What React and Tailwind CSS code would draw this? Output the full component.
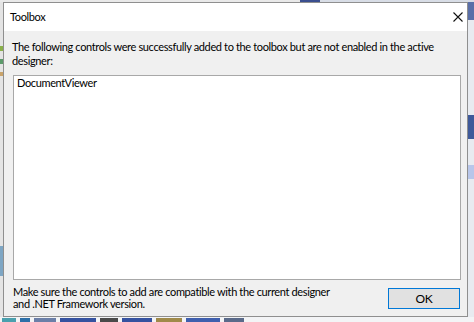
export default function App() {
  const font = { fontFamily: 'Lato, "Noto Sans", sans-serif' };

  const bottomBits = [
    ["w-[14px]", "bg-[#4aa0ae]"],
    ["w-[10px]", "bg-[#2d6fa8]"],
    ["w-[22px]", "bg-[#6b7fa8]"],
    ["w-[36px]", "bg-[#3552a0]"],
    ["w-[18px]", "bg-[#4a4a4a]"],
    ["w-[30px]", "bg-[#3552a0]"],
    ["w-[26px]", "bg-[#a08a4a]"],
    ["w-[34px]", "bg-[#3f5fae]"],
    ["w-[20px]", "bg-[#5a6a8a]"],
  ];

  return (
    <div className="w-[474px] h-[322px] overflow-hidden bg-[#eef0f3] flex flex-col" style={font}>
      <div className="h-[2px] flex">
        <div className="w-[300px] bg-[#e9e9e9]" />
        <div className="w-[20px] bg-[#3a4f8f]" />
        <div className="flex-1 bg-[#d8dde6]" />
      </div>
      <div className="flex h-[315px]">
        {/* left backdrop strip */}
        <div className="w-[3px] flex flex-col bg-[#e4e4e4]">
          <div className="h-[44px]" />
          <div className="h-[5px] bg-[#8ab04a]" />
          <div className="h-[8px]" />
          <div className="h-[5px] bg-[#5c9a6a]" />
          <div className="h-[8px]" />
          <div className="h-[4px] bg-[#c9a36a]" />
          <div className="h-[170px]" />
          <div className="h-[30px] bg-[#7ea6c4]" />
        </div>

        {/* dialog */}
        <div className="w-[465px] flex flex-col border border-[#8f8f8f] bg-[#f0f0f0] text-[11px] leading-[14px] tracking-[-0.36px] text-black">
          <div className="h-[28px] bg-white flex items-center justify-between pl-[6px] pr-[1px]">
            <span>Toolbox</span>
            <svg width="16" height="16" viewBox="0 0 16 16">
              <path d="M3.5 3.5 L12.5 12.5 M12.5 3.5 L3.5 12.5" stroke="#111" strokeWidth="1.1" fill="none" />
            </svg>
          </div>
          <div className="flex-1 flex flex-col pl-[8px] pr-[6px] pt-[9px]">
            <p className="whitespace-nowrap">
              The following controls were successfully added to the toolbox but are not enabled in the active
              <br />
              designer:
            </p>
            <div className="mt-[7px] ml-[1px] h-[205px] bg-white border border-[#a8a8a8] px-[3px]">
              DocumentViewer
            </div>
            <div className="flex items-start justify-between mt-[6px] pl-[1px]">
              <p className="whitespace-nowrap leading-[12px]">
                Make sure the controls to add are compatible with the current designer
                <br />
                and .NET Framework version.
              </p>
              <button className="w-[72px] h-[21px] mt-[2px] mr-[1px] bg-[#e1e1e1] border border-[#0078d7] flex items-center justify-center text-[12px]">
                OK
              </button>
            </div>
          </div>
        </div>

        {/* right backdrop strip */}
        <div className="flex-1 flex flex-col bg-[#e8ebf0]">
          <div className="h-[18px] bg-[#5a6fa8]" />
          <div className="h-[95px]" />
          <div className="h-[24px] bg-[#3f5a9a]" />
          <div className="h-[26px]" />
          <div className="h-[14px] bg-[#b8c6ea]" />
        </div>
      </div>
      <div className="flex-1 bg-[#f3f4f6] flex items-start gap-[4px] pl-[2px] pt-[1px]">
        {bottomBits.map(([w, c], i) => (
          <div key={i} className={`${w} ${c} h-[4px]`} />
        ))}
      </div>
    </div>
  );
}
